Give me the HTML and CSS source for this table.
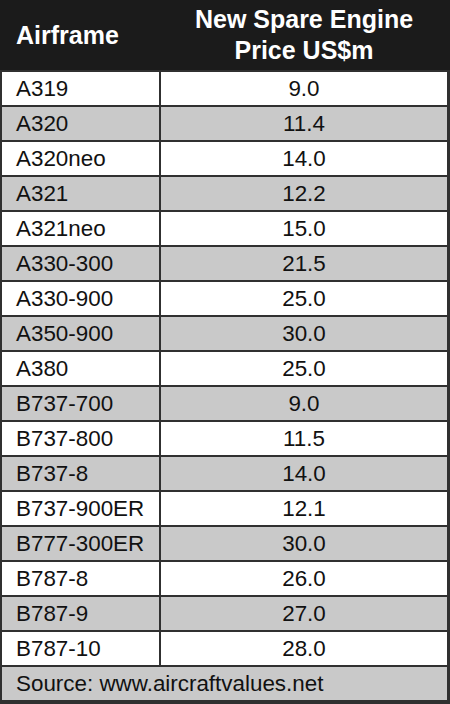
FILE: index.html
```html
<!DOCTYPE html>
<html lang="en">
<head>
<meta charset="utf-8">
<title>New Spare Engine Price</title>
<link rel="stylesheet" href="styles.css">
</head>
<body>
<div class="table" role="table">
  <div class="head" role="row">
    <div class="hcell left" role="columnheader">Airframe</div>
    <div class="hcell right" role="columnheader">New Spare Engine<br>Price US$m</div>
  </div>
  <div class="cell name">A319</div><div class="cell val">9.0</div>
  <div class="cell name alt">A320</div><div class="cell val alt">11.4</div>
  <div class="cell name">A320neo</div><div class="cell val">14.0</div>
  <div class="cell name alt">A321</div><div class="cell val alt">12.2</div>
  <div class="cell name">A321neo</div><div class="cell val">15.0</div>
  <div class="cell name alt">A330-300</div><div class="cell val alt">21.5</div>
  <div class="cell name">A330-900</div><div class="cell val">25.0</div>
  <div class="cell name alt">A350-900</div><div class="cell val alt">30.0</div>
  <div class="cell name">A380</div><div class="cell val">25.0</div>
  <div class="cell name alt">B737-700</div><div class="cell val alt">9.0</div>
  <div class="cell name">B737-800</div><div class="cell val">11.5</div>
  <div class="cell name alt">B737-8</div><div class="cell val alt">14.0</div>
  <div class="cell name">B737-900ER</div><div class="cell val">12.1</div>
  <div class="cell name alt">B777-300ER</div><div class="cell val alt">30.0</div>
  <div class="cell name">B787-8</div><div class="cell val">26.0</div>
  <div class="cell name alt">B787-9</div><div class="cell val alt">27.0</div>
  <div class="cell name">B787-10</div><div class="cell val">28.0</div>
  <div class="cell source alt">Source: www.aircraftvalues.net</div>
</div>
</body>
</html>
```

FILE: styles.css
```css
html, body {
  margin: 0;
  padding: 0;
  background: #ffffff;
}

body {
  font-family: "Liberation Sans", Arial, Helvetica, sans-serif;
  color: #111111;
}

.table {
  width: 450px;
  height: 704px;
  box-sizing: border-box;
  display: grid;
  grid-template-columns: 157px 286px;
  grid-auto-rows: 33px;
  grid-template-rows: 70px;
  gap: 2px;
  padding: 0 3px 4px 2px;
  background: #303030;
}

.head {
  grid-column: 1 / 3;
  margin: 0 -3px 0 -2px;
  padding: 0 3px 0 2px;
  background: #1b1b1b;
  display: grid;
  grid-template-columns: 157px 286px;
  column-gap: 2px;
  color: #ffffff;
  font-weight: bold;
  font-size: 25px;
  line-height: 31px;
}

.hcell {
  display: flex;
  align-items: center;
}

.hcell.left {
  padding-left: 14px;
}

.hcell.right {
  justify-content: center;
  text-align: center;
}

.cell {
  background: #ffffff;
  font-size: 22.4px;
  line-height: 33px;
  white-space: nowrap;
}

.cell.alt {
  background: #c9c9c9;
}

.name {
  padding-left: 14px;
}

.val {
  text-align: center;
}

.source {
  grid-column: 1 / 3;
  padding-left: 14px;
}
```
